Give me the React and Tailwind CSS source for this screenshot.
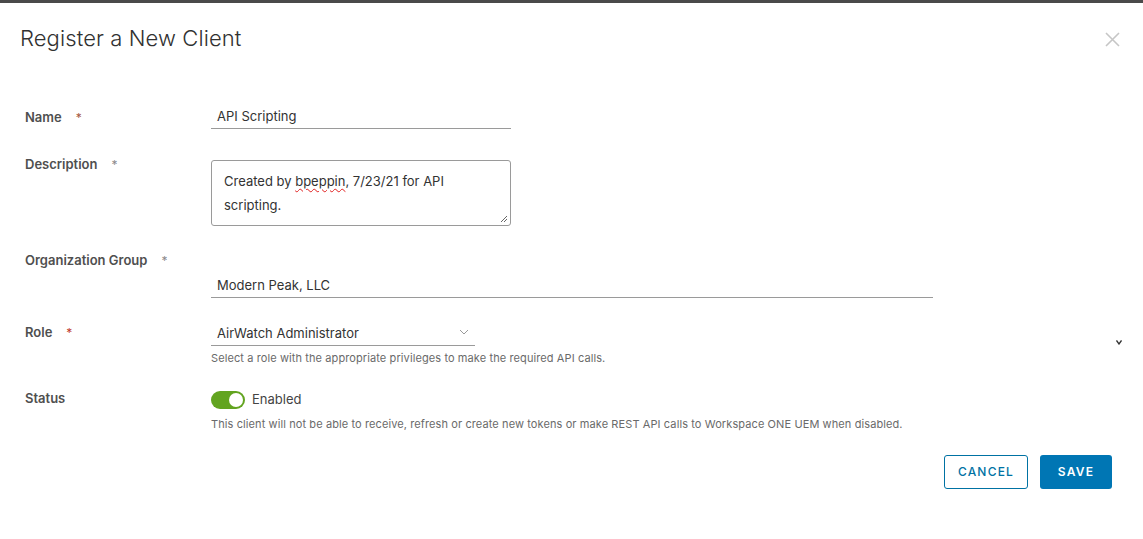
import { useState } from 'react'

const font = { fontFamily: 'Inter, "Noto Sans", sans-serif' }

const Label = ({ children, star = 'text-[#8a8a8a]', lead = 'leading-[24px]' }) => (
  <div className={`w-[186px] shrink-0 text-[13px] font-semibold text-[#4f4f4f] ${lead}`}>
    {children}
    <span className={`ml-[14px] text-[12px] font-normal ${star}`}>*</span>
  </div>
)

const App = () => {
  const [enabled, setEnabled] = useState(true)

  return (
    <div className="w-[1143px] h-[539px] bg-white text-[#333]" style={font}>
      <div className="h-[3px] bg-[#4a4a4a]" />

      {/* Header */}
      <div className="flex items-center justify-between pl-[20px] pr-[23px] mt-[21px] h-[28px]">
        <h1 className="text-[22px] font-light text-[#313131] leading-[28px] tracking-[0.1px]">Register a New Client</h1>
        <svg width="15" height="15" viewBox="0 0 15 15" className="mt-[2px]">
          <path d="M1 1 L14 14 M14 1 L1 14" stroke="#c6c6c6" strokeWidth="1.6" />
        </svg>
      </div>

      {/* Form */}
      <div className="pl-[25px] pr-[31px] mt-[53px]">
        <div className="flex">
          <Label star="text-[#a5563f]">Name</Label>
          <div className="w-[300px] h-[24px] border-b border-[#9a9a9a] pl-[6px] text-[13px] leading-[23px]">API Scripting</div>
        </div>

        <div className="flex mt-[30px]">
          <Label lead="leading-[12px] -mt-[2px]">Description</Label>
          <div className="relative w-[300px] h-[66px] border border-[#9a9a9a] rounded-[3px] pl-[12px] pt-[8px] text-[13px] leading-[24px]">
            Created by <span className="underline decoration-wavy decoration-[#e02020] decoration-1 underline-offset-2">bpeppin</span>, 7/23/21 for API
            <br />scripting.
            <svg width="8" height="8" viewBox="0 0 8 8" className="absolute right-[2px] bottom-[2px]">
              <path d="M7 1 L1 7 M7 4 L4 7" stroke="#666" strokeWidth="1" />
            </svg>
          </div>
        </div>

        <div className="flex items-start mt-[27px]">
          <Label lead="leading-[14px]">Organization Group</Label>
          <div className="mt-[21px] w-[722px] h-[24px] border-b border-[#9a9a9a] pl-[6px] text-[13px] leading-[23px]">Modern Peak, LLC</div>
        </div>

        <div className="relative flex mt-[24px]">
          <Label star="text-[#c0392b]" lead="leading-[20px]">Role</Label>
          <div>
            <div className="flex items-center justify-between w-[264px] h-[24px] border-b border-[#9a9a9a] pl-[6px] pr-[6px] text-[13px]">
              <span className="leading-[23px]">AirWatch Administrator</span>
              <svg width="10" height="6" viewBox="0 0 10 6" className="mb-[4px]">
                <path d="M1 1 L5 5 L9 1" stroke="#9a9a9a" strokeWidth="1" fill="none" />
              </svg>
            </div>
            <p className="mt-[5px] text-[11px] leading-[14px] tracking-[0.1px] text-[#6a6a6a]">Select a role with the appropriate privileges to make the required API calls.</p>
          </div>
          <svg width="6" height="5" viewBox="0 0 6 5" className="absolute right-[-10px] top-[18px]">
            <path d="M0.5 0.5 L3 4 L5.5 0.5" stroke="#333" strokeWidth="1.3" fill="none" />
          </svg>
        </div>

        <div className="flex mt-[26px]">
          <div className="w-[186px] shrink-0 text-[13px] font-semibold text-[#4f4f4f] leading-[14px]">Status</div>
          <div>
            <div className="flex items-center h-[18px]">
              <button
                onClick={() => setEnabled(!enabled)}
                className={`relative w-[34px] h-[18px] rounded-full ${enabled ? 'bg-[#62a420]' : 'bg-[#8c8c8c]'}`}
              >
                <span className={`absolute top-[2px] w-[14px] h-[14px] rounded-full bg-white ${enabled ? 'left-[18px]' : 'left-[2px]'}`} />
              </button>
              <span className="ml-[7px] text-[13px] text-[#444]">Enabled</span>
            </div>
            <p className="mt-[8px] text-[11px] leading-[14px] tracking-[0.1px] text-[#6a6a6a]">This client will not be able to receive, refresh or create new tokens or make REST API calls to Workspace ONE UEM when disabled.</p>
          </div>
        </div>

        {/* Actions */}
        <div className="flex justify-end gap-[12px] mt-[24px]">
          <button className="w-[84px] h-[34px] border border-[#0072a3] rounded-[3px] text-[#0072a3] text-[12px] font-medium tracking-[1.2px]">CANCEL</button>
          <button className="w-[72px] h-[34px] bg-[#0076b4] rounded-[3px] text-white text-[12px] font-semibold tracking-[1.2px]">SAVE</button>
        </div>
      </div>
    </div>
  )
}

export default App
